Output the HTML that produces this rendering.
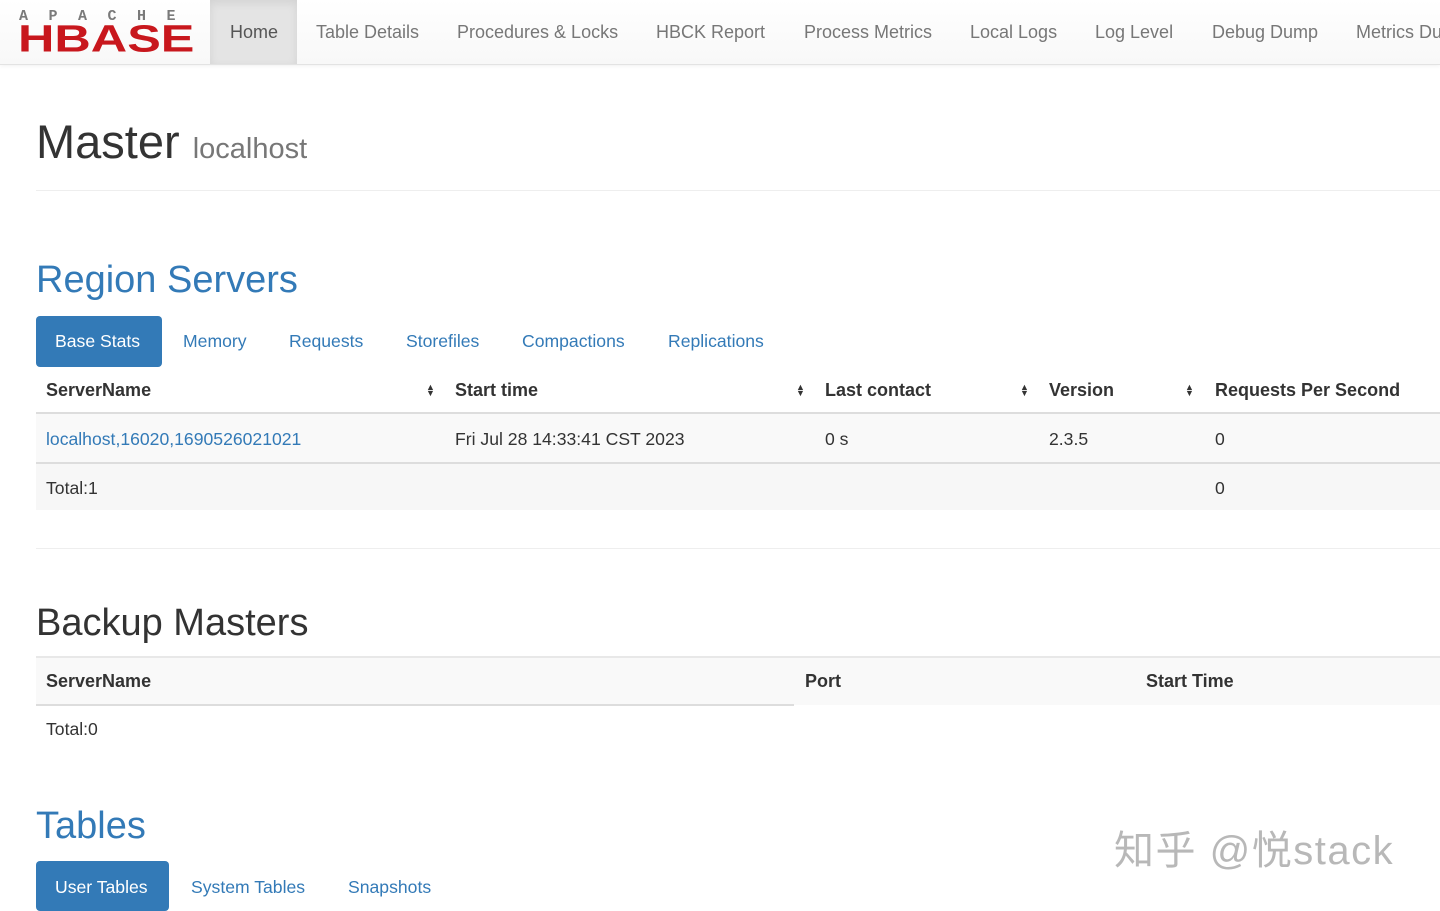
<!DOCTYPE html>
<html><head><meta charset="utf-8"><style>
*{margin:0;padding:0;box-sizing:border-box}
body{width:1440px;height:903px;overflow:hidden;background:#fff;font-family:"Liberation Sans",Arial,sans-serif;color:#333;position:relative}
.a{position:absolute;white-space:nowrap}
.nav{position:absolute;left:0;top:0;width:1440px;height:65px;background:linear-gradient(#fff,#f8f8f8);border-bottom:1px solid #e3e3e3;box-shadow:0 1px 4px rgba(0,0,0,.06)}
.nav span{position:absolute;top:22px;font-size:18px;color:#777;white-space:nowrap}
.blue{color:#337ab7}
.h{font-weight:bold;font-size:18px;color:#333}
.t{font-size:17.6px}
.s{font-size:9px;line-height:6px;color:#333}
</style></head><body>
<div class="nav">
  <div class="a" style="left:19px;top:8px;font:bold 15px 'Liberation Mono',monospace;color:#7a7a7a;letter-spacing:20.5px">APACHE</div>
  <div class="a" style="left:18px;top:20px;font:bold 40px 'Liberation Sans',sans-serif;color:#c8171d;transform:scale(1.26,0.95);transform-origin:left top;line-height:40px">HBASE</div>
  <div class="a" style="left:210px;top:0;width:87px;height:64px;background:#e4e4e4;box-shadow:inset 0 3px 9px rgba(0,0,0,.08)"></div>
  <span style="left:230px;color:#555">Home</span>
  <span style="left:316px">Table Details</span>
  <span style="left:457px">Procedures &amp; Locks</span>
  <span style="left:656px">HBCK Report</span>
  <span style="left:804px">Process Metrics</span>
  <span style="left:970px">Local Logs</span>
  <span style="left:1095px">Log Level</span>
  <span style="left:1212px">Debug Dump</span>
  <span style="left:1356px">Metrics Dump</span>
</div>

<div class="a" style="left:36px;top:114px;font-size:47px">Master <span style="font-size:29px;color:#777">localhost</span></div>
<div class="a" style="left:36px;top:190px;width:1404px;height:1px;background:#eee"></div>

<div class="a blue" style="left:36px;top:259px;font-size:38px">Region Servers</div>
<div class="a" style="left:36px;top:316px;width:126px;height:51px;background:#337ab7;border-radius:4px"></div>
<div class="a t" style="left:55px;top:331px;color:#fff">Base Stats</div>
<div class="a t blue" style="left:183px;top:331px">Memory</div>
<div class="a t blue" style="left:289px;top:331px">Requests</div>
<div class="a t blue" style="left:406px;top:331px">Storefiles</div>
<div class="a t blue" style="left:522px;top:331px">Compactions</div>
<div class="a t blue" style="left:668px;top:331px">Replications</div>

<div class="a h" style="left:46px;top:380px">ServerName</div>
<div class="a h" style="left:455px;top:380px">Start time</div>
<div class="a h" style="left:825px;top:380px">Last contact</div>
<div class="a h" style="left:1049px;top:380px">Version</div>
<div class="a h" style="left:1215px;top:380px">Requests Per Second</div>
<div class="a s" style="left:426px;top:384px">▲<br>▼</div>
<div class="a s" style="left:796px;top:384px">▲<br>▼</div>
<div class="a s" style="left:1020px;top:384px">▲<br>▼</div>
<div class="a s" style="left:1185px;top:384px">▲<br>▼</div>
<div class="a" style="left:36px;top:412px;width:1404px;height:2px;background:#ddd"></div>
<div class="a" style="left:36px;top:414px;width:1404px;height:48px;background:#f9f9f9"></div>
<div class="a t blue" style="left:46px;top:429px">localhost,16020,1690526021021</div>
<div class="a t" style="left:455px;top:429px">Fri Jul 28 14:33:41 CST 2023</div>
<div class="a t" style="left:825px;top:429px">0 s</div>
<div class="a t" style="left:1049px;top:429px">2.3.5</div>
<div class="a t" style="left:1215px;top:429px">0</div>
<div class="a" style="left:36px;top:462px;width:1404px;height:2px;background:#ddd"></div>
<div class="a" style="left:36px;top:464px;width:1404px;height:46px;background:#f7f7f7"></div>
<div class="a t" style="left:46px;top:478px">Total:1</div>
<div class="a t" style="left:1215px;top:478px">0</div>
<div class="a" style="left:36px;top:548px;width:1404px;height:1px;background:#eee"></div>

<div class="a" style="left:36px;top:602px;font-size:38px">Backup Masters</div>
<div class="a" style="left:36px;top:656px;width:1404px;height:2px;background:#e8e8e8"></div>
<div class="a" style="left:36px;top:658px;width:1404px;height:47px;background:#f9f9f9"></div>
<div class="a" style="left:36px;top:704px;width:758px;height:2px;background:#ddd"></div>
<div class="a h" style="left:46px;top:671px">ServerName</div>
<div class="a h" style="left:805px;top:671px">Port</div>
<div class="a h" style="left:1146px;top:671px">Start Time</div>
<div class="a t" style="left:46px;top:719px">Total:0</div>

<div class="a blue" style="left:36px;top:805px;font-size:38px">Tables</div>
<div class="a" style="left:36px;top:861px;width:133px;height:50px;background:#337ab7;border-radius:4px"></div>
<div class="a t" style="left:55px;top:877px;color:#fff">User Tables</div>
<div class="a t blue" style="left:191px;top:877px">System Tables</div>
<div class="a t blue" style="left:348px;top:877px">Snapshots</div>

<div class="a" style="left:1114px;top:818px;font-size:40px;letter-spacing:1.5px;color:#b8b8b8;font-family:'Liberation Sans','Noto Sans CJK SC',sans-serif">知乎 @悦stack</div>
</body></html>
